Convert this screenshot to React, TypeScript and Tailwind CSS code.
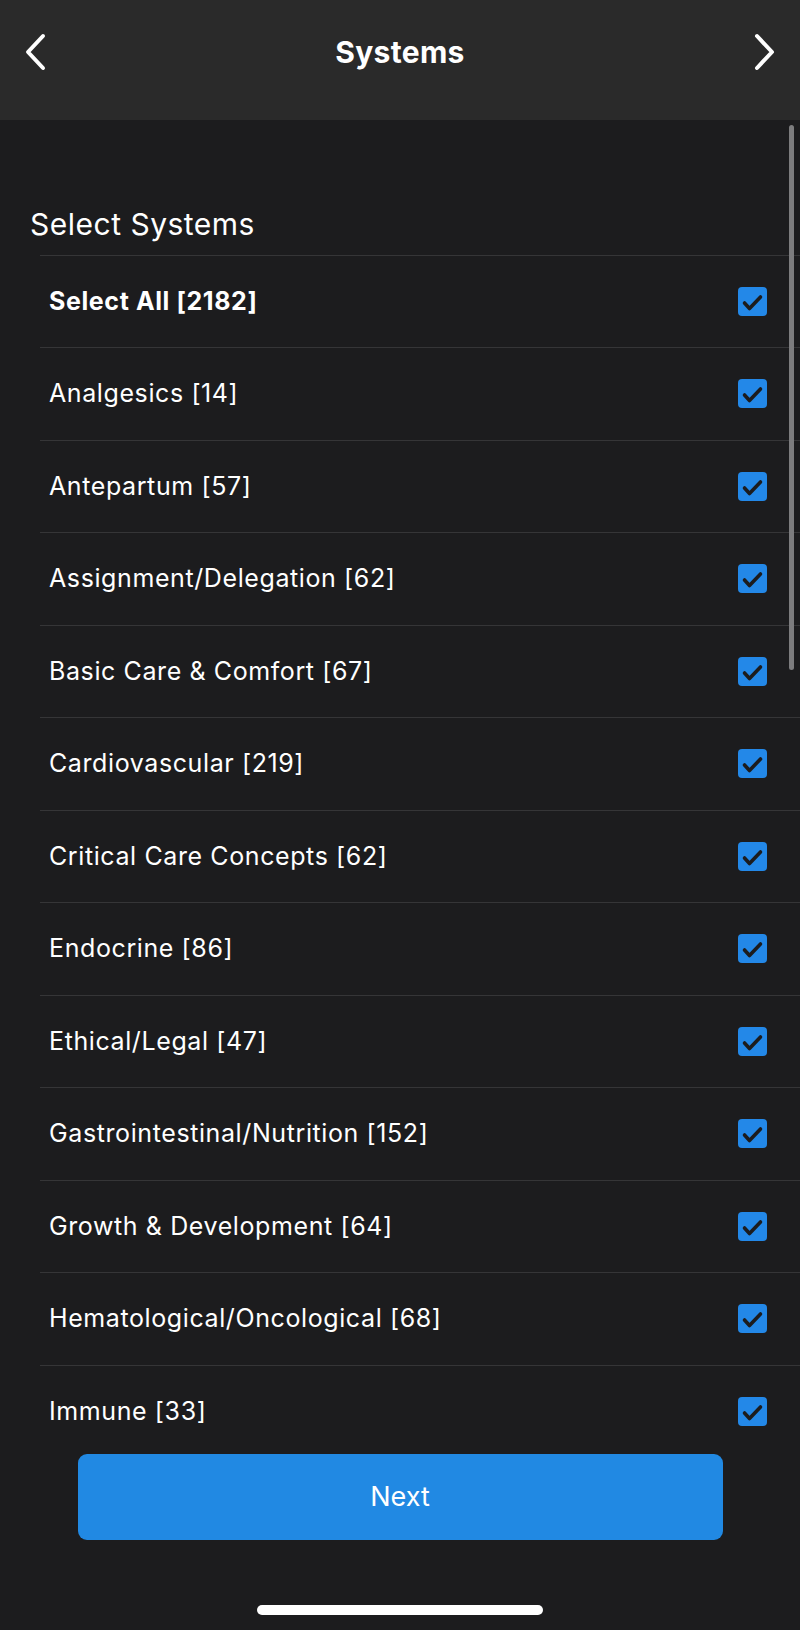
import React from 'react';

// --- Data ---
const systems: { label: string; count: number }[] = [
  { label: 'Analgesics', count: 14 },
  { label: 'Antepartum', count: 57 },
  { label: 'Assignment/Delegation', count: 62 },
  { label: 'Basic Care & Comfort', count: 67 },
  { label: 'Cardiovascular', count: 219 },
  { label: 'Critical Care Concepts', count: 62 },
  { label: 'Endocrine', count: 86 },
  { label: 'Ethical/Legal', count: 47 },
  { label: 'Gastrointestinal/Nutrition', count: 152 },
  { label: 'Growth & Development', count: 64 },
  { label: 'Hematological/Oncological', count: 68 },
  { label: 'Immune', count: 33 },
];

// --- Checkbox ---
function Checkbox() {
  return (
    <div className="w-[29px] h-[29px] rounded-[4px] bg-[#2388e8] flex-none">
      <svg width="29" height="29" viewBox="0 0 29 29" fill="none">
        <polyline
          points="6.5,16 11.5,21.5 22.5,10"
          stroke="#1c1c1e"
          strokeWidth="3.6"
          strokeLinecap="round"
          strokeLinejoin="round"
        />
      </svg>
    </div>
  );
}

// --- Row ---
function Row({ text, bold }: { text: string; bold?: boolean }) {
  return (
    <div className="ml-10 h-[92.5px] border-t border-[#353537] flex items-center justify-between pl-[9px] pr-[33px]">
      <span className={`text-[25px] text-white tracking-[0.6px] ${bold ? 'font-bold' : 'font-normal'}`}>{text}</span>
      <Checkbox />
    </div>
  );
}

export default function App() {
  return (
    <div className="w-[800px] h-[1630px] bg-[#1c1c1e] flex flex-col font-['Inter',sans-serif] overflow-hidden">
      {/* Header */}
      <div className="h-[120px] flex-none bg-[#2a2a2a]">
        <div className="h-[104px] flex items-center justify-between px-[24px]">
          <svg width="26" height="40" viewBox="0 0 26 40" fill="none">
            <polyline points="19,4 4,20 19,36" stroke="white" strokeWidth="4" strokeLinecap="round" strokeLinejoin="round" />
          </svg>
          <h1 className="text-[30px] font-bold text-white tracking-[0.3px]">Systems</h1>
          <svg width="26" height="40" viewBox="0 0 26 40" fill="none">
            <polyline points="7,4 22,20 7,36" stroke="white" strokeWidth="4" strokeLinecap="round" strokeLinejoin="round" />
          </svg>
        </div>
      </div>

      {/* List */}
      <div className="relative flex-1 overflow-hidden">
        <div className="h-[134.5px] flex items-end pb-[8px] pl-[30px]">
          <h2 className="text-[30px] font-normal text-white tracking-[0.5px]">Select Systems</h2>
        </div>
        <Row text="Select All [2182]" bold />
        {systems.map((s) => (
          <Row key={s.label} text={`${s.label} [${s.count}]`} />
        ))}
        {/* scrollbar */}
        <div className="absolute top-[5px] right-[6px] w-[5px] h-[545px] rounded-full bg-[#7c7c7e]" />
      </div>

      {/* Footer */}
      <div className="h-[176px] flex-none flex flex-col items-center">
        <button className="w-[645px] h-[86px] rounded-[9px] bg-[#2189e3] text-white text-[27px] font-normal">
          Next
        </button>
        <div className="mt-[65px] w-[286px] h-[10px] rounded-full bg-white" />
      </div>
    </div>
  );
}
